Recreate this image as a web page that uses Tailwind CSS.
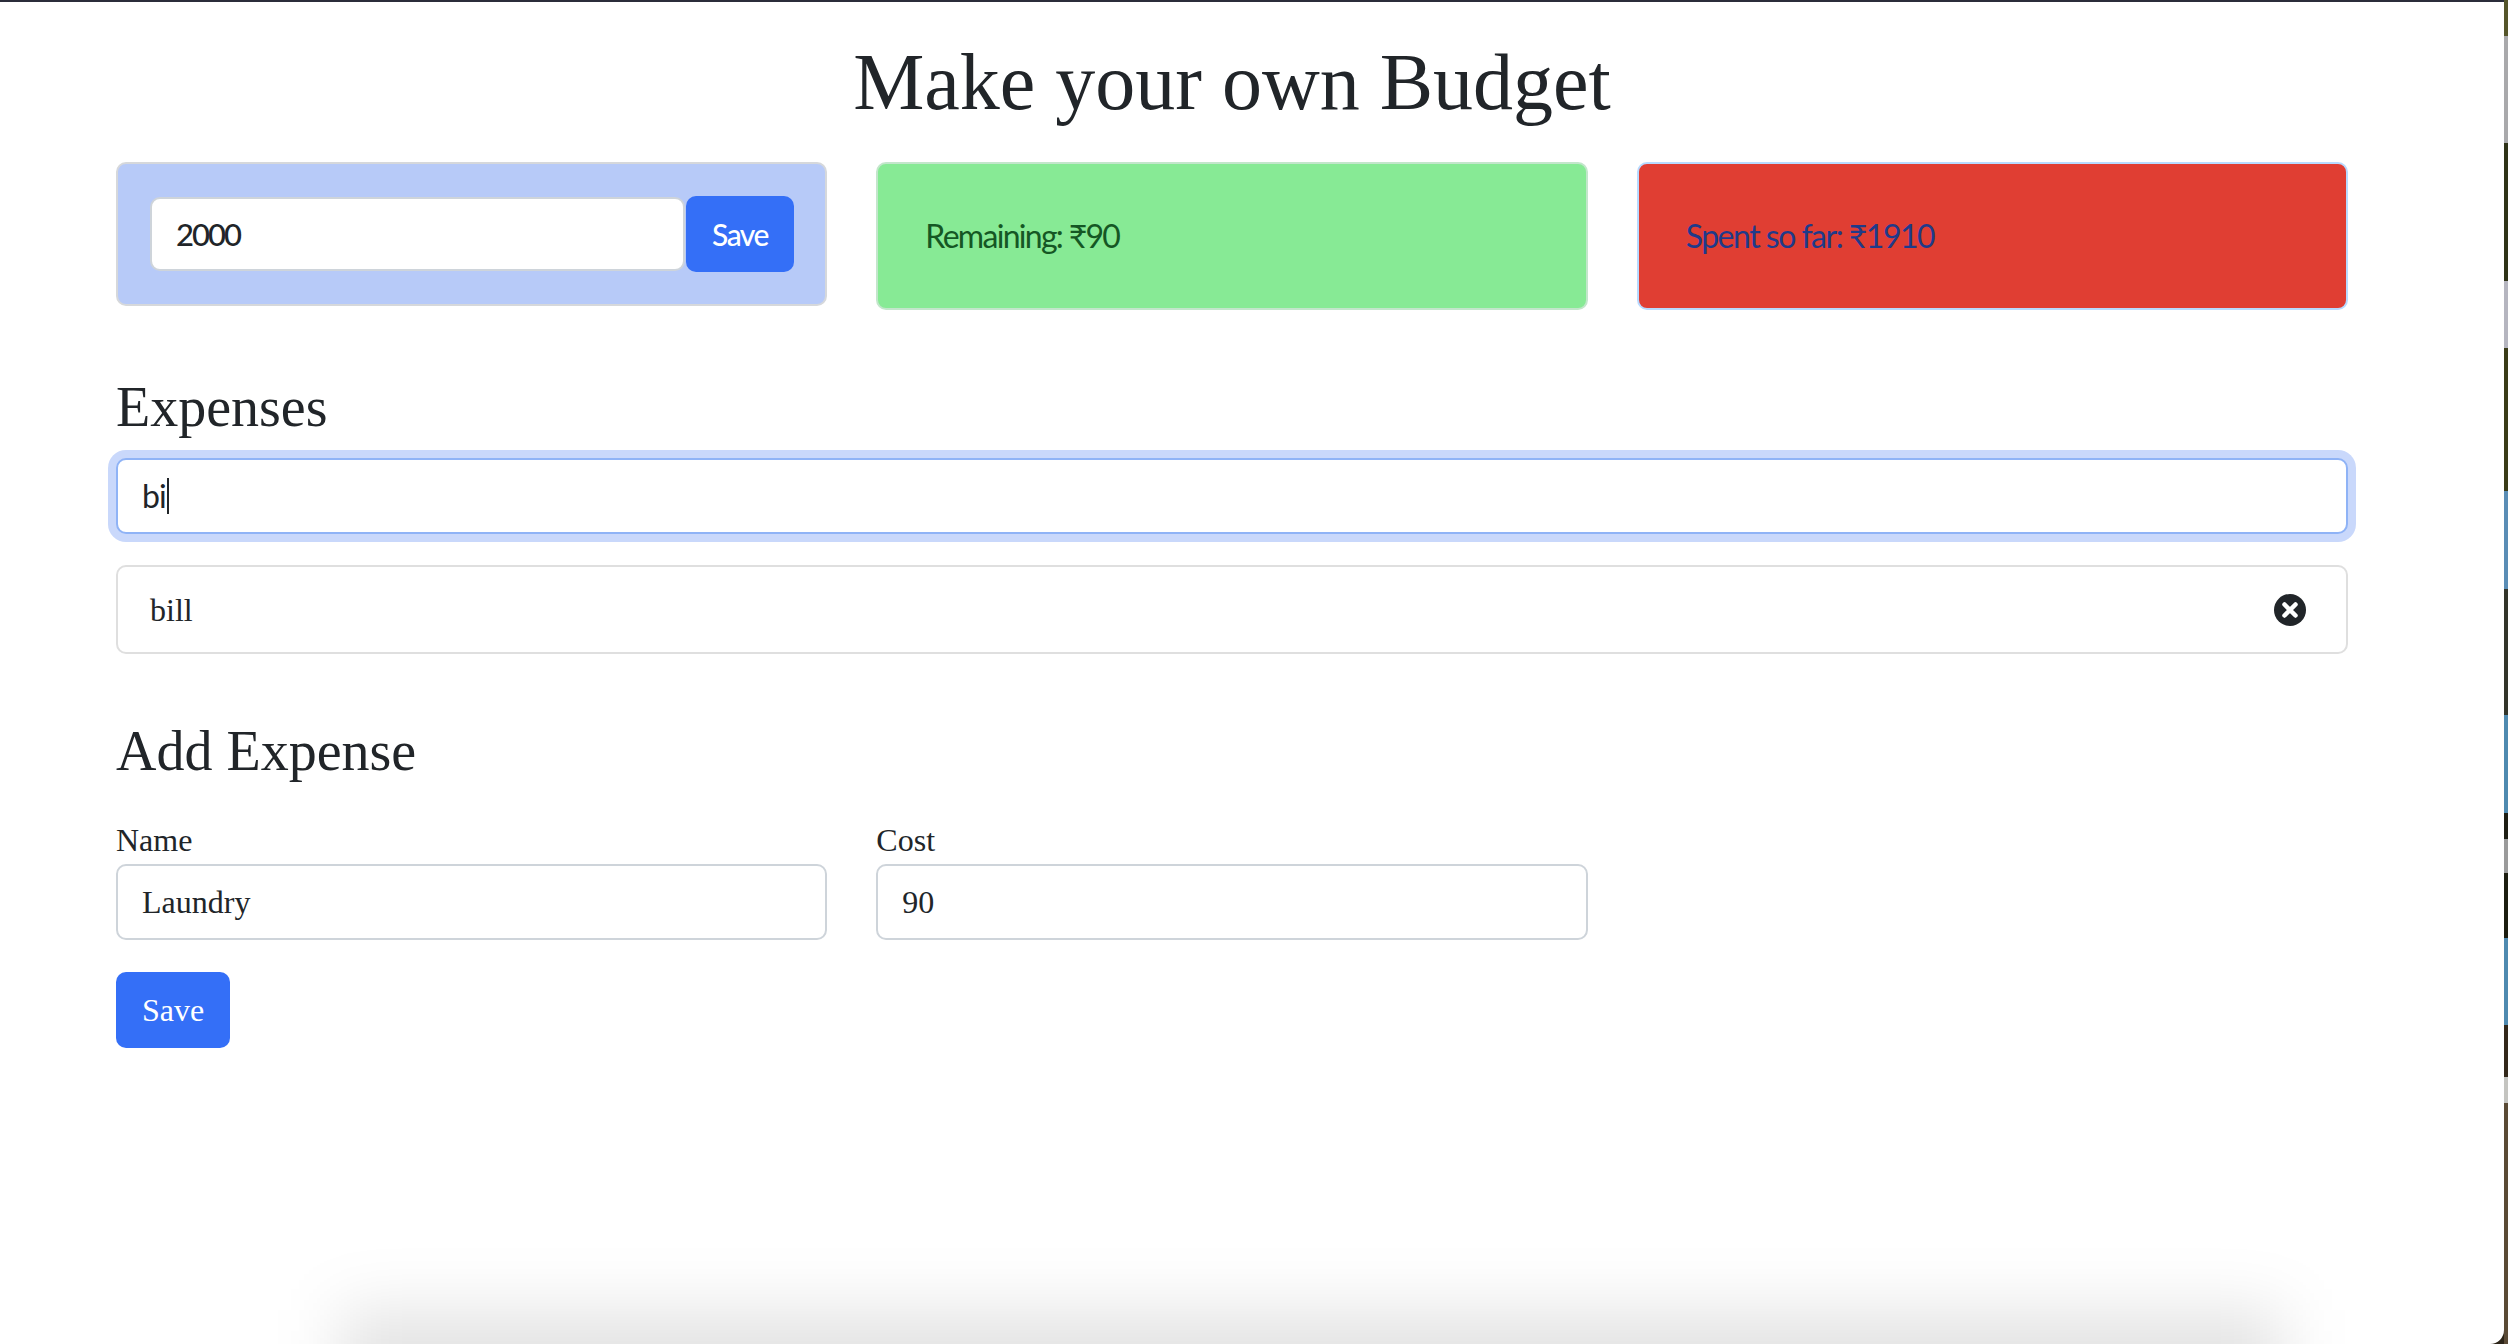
<!DOCTYPE html>
<html lang="en">
  <head>
    <meta charset="UTF-8" />
    <title>Make your own Budget</title>
    <script src="https://cdn.jsdelivr.net/npm/@tailwindcss/browser@4"></script>
  </head>
  <body class="relative h-[1344px] overflow-hidden bg-[#2c2418] font-['Liberation_Serif',serif] text-[32px] text-[#212529]">
    <div class="flex h-full">
      <main class="w-[2504px] rounded-br-[14px] border-t-2 border-[#2b2d3a] bg-white">
        <div class="ml-[116px] w-[2232px]">
          <h1 class="pt-[32px] text-center text-[80px] leading-[96px]">Make your own Budget</h1>

          <!-- budget, remaining, spent -->
          <div class="mt-[32px] grid grid-cols-3 items-start gap-x-[49px]">
            <div class="flex h-[144px] items-center rounded-[10px] border-2 border-[#d6d8db] bg-[#b7caf8] pl-[32px] font-['Lato',sans-serif]">
              <div class="flex h-[74px] w-[535px] items-center rounded-[10px] border-2 border-[#ced4da] bg-white pl-[24px] text-[31px] font-medium tracking-[-2px]">2000</div>
              <button class="ml-px h-[76px] w-[108px] rounded-[10px] bg-[#346ff7] text-[30px] font-medium tracking-[-1.5px] text-white">Save</button>
            </div>
            <div class="flex h-[148px] items-center rounded-[10px] border-2 border-[#c3e6cb] bg-[#87ea95] pl-[47px] font-['Lato',sans-serif] text-[32px] tracking-[-1.7px] text-[#155724]">Remaining: ₹90</div>
            <div class="flex h-[148px] items-center rounded-[10px] border-2 border-[#b8daff] bg-[#e03e33] pl-[47px] font-['Lato',sans-serif] text-[32px] tracking-[-1.5px] text-[#1f3a8a]">Spent so far: ₹1910</div>
          </div>

          <h3 class="mt-[64px] text-[56px] leading-[67px]">Expenses</h3>
          <div class="mt-[17px] flex h-[76px] items-center rounded-[10px] border-2 border-[#8fb3f6] bg-white pl-[24px] font-['Lato',sans-serif] text-[32px] tracking-[-1px] shadow-[0_0_0_8px_#c9d8fb]">
            bi<span class="ml-px h-[36px] w-[2px] bg-[#212529]"></span>
          </div>
          <ul class="mt-[31px]">
            <li class="flex h-[89px] items-center justify-between rounded-[10px] border-2 border-[#dfdfdf] pl-[32px] pr-[40px]">
              bill
              <svg class="size-[32px]" viewBox="0 0 32 32">
                <circle cx="16" cy="16" r="16" fill="#212529" />
                <path d="M10.5 10.5l11 11M21.5 10.5l-11 11" stroke="#fff" stroke-width="4.5" stroke-linecap="round" />
              </svg>
            </li>
          </ul>

          <h3 class="mt-[64px] text-[56px] leading-[67px]">Add Expense</h3>
          <form class="mt-[31px]">
            <div class="grid grid-cols-3 gap-x-[49px]">
              <div>
                <label class="block leading-[48px]">Name</label>
                <div class="flex h-[76px] items-center rounded-[10px] border-2 border-[#ced4da] pl-[24px]">Laundry</div>
              </div>
              <div>
                <label class="block leading-[48px]">Cost</label>
                <div class="flex h-[76px] items-center rounded-[10px] border-2 border-[#ced4da] pl-[24px]">90</div>
              </div>
            </div>
            <button class="mt-[32px] h-[76px] w-[114px] rounded-[10px] bg-[#346ff7] text-white">Save</button>
          </form>
        </div>
      </main>

      <!-- sliver of desktop on the right -->
      <div class="flex h-full w-[4px] flex-col">
        <div class="h-[36px] bg-[#55552a]"></div>
        <div class="h-[107px] bg-[#a9a9ab]"></div>
        <div class="h-[138px] bg-[#2f3318]"></div>
        <div class="h-[67px] bg-[#b5b5bf]"></div>
        <div class="h-[143px] bg-[#3a3c18]"></div>
        <div class="h-[98px] bg-[#5a8db5]"></div>
        <div class="h-[126px] bg-[#33352a]"></div>
        <div class="h-[98px] bg-[#4f8ab0]"></div>
        <div class="h-[26px] bg-[#1e1e14]"></div>
        <div class="h-[34px] bg-[#9a9a9a]"></div>
        <div class="h-[65px] bg-[#1c1d10]"></div>
        <div class="h-[87px] bg-[#4f8ab0]"></div>
        <div class="h-[52px] bg-[#33281a]"></div>
        <div class="h-[26px] bg-[#c4c4c0]"></div>
        <div class="flex-1 bg-[#5a4a35]"></div>
      </div>
    </div>

    <!-- dock shadow at the bottom -->
    <div class="pointer-events-none absolute inset-0 overflow-hidden">
      <div class="absolute left-[340px] top-[1310px] h-[200px] w-[1943px] bg-black/[0.11] blur-[32px]"></div>
    </div>
  </body>
</html>
